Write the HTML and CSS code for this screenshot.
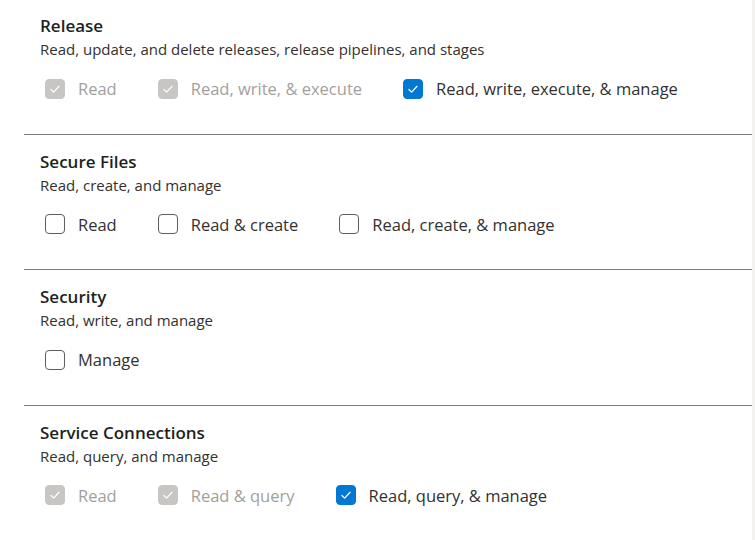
FILE: index.html
```html
<!DOCTYPE html>
<html lang="en">
<head>
<meta charset="utf-8">
<title>Scopes</title>
<link rel="stylesheet" href="styles.css">
</head>
<body>
<div class="page">
  <div class="content">
    <section class="scope">
      <div class="scope-title">Release</div>
      <div class="scope-desc">Read, update, and delete releases, release pipelines, and stages</div>
      <div class="options">
        <label class="option disabled"><span class="box checked"><svg viewBox="0 0 20 20"><path d="M5.5 10.5l3 3 6-6.5"/></svg></span><span class="text">Read</span></label>
        <label class="option disabled"><span class="box checked"><svg viewBox="0 0 20 20"><path d="M5.5 10.5l3 3 6-6.5"/></svg></span><span class="text">Read, write, &amp; execute</span></label>
        <label class="option"><span class="box checked"><svg viewBox="0 0 20 20"><path d="M5.5 10.5l3 3 6-6.5"/></svg></span><span class="text">Read, write, execute, &amp; manage</span></label>
      </div>
    </section>
    <section class="scope">
      <div class="scope-title">Secure Files</div>
      <div class="scope-desc">Read, create, and manage</div>
      <div class="options">
        <label class="option"><span class="box"></span><span class="text">Read</span></label>
        <label class="option"><span class="box"></span><span class="text">Read &amp; create</span></label>
        <label class="option"><span class="box"></span><span class="text">Read, create, &amp; manage</span></label>
      </div>
    </section>
    <section class="scope">
      <div class="scope-title">Security</div>
      <div class="scope-desc">Read, write, and manage</div>
      <div class="options">
        <label class="option"><span class="box"></span><span class="text">Manage</span></label>
      </div>
    </section>
    <section class="scope last">
      <div class="scope-title">Service Connections</div>
      <div class="scope-desc">Read, query, and manage</div>
      <div class="options">
        <label class="option disabled"><span class="box checked"><svg viewBox="0 0 20 20"><path d="M5.5 10.5l3 3 6-6.5"/></svg></span><span class="text">Read</span></label>
        <label class="option disabled"><span class="box checked"><svg viewBox="0 0 20 20"><path d="M5.5 10.5l3 3 6-6.5"/></svg></span><span class="text">Read &amp; query</span></label>
        <label class="option"><span class="box checked"><svg viewBox="0 0 20 20"><path d="M5.5 10.5l3 3 6-6.5"/></svg></span><span class="text">Read, query, &amp; manage</span></label>
      </div>
    </section>
  </div>
  <div class="scrollbar"></div>
</div>
</body>
</html>
```
FILE: styles.css
```css
html, body {
  margin: 0;
  padding: 0;
  background: #ffffff;
}
body {
  font-family: "Open Sans", "Noto Sans", sans-serif;
  color: #201f1e;
}
.page {
  display: flex;
  height: 540px;
  overflow: hidden;
}
.content {
  flex: 1;
  margin-left: 24px;
  margin-top: -1px;
}
.scrollbar {
  width: 3px;
  background: #f3f2f1;
}
.scope {
  padding: 16px 0 33px 16px;
  border-bottom: 1px solid #7a7a7a;
}
.scope.last {
  border-bottom: none;
}
.scope-title {
  font-size: 17px;
  font-weight: 600;
  line-height: 22px;
  color: #201f1e;
}
.scope-desc {
  font-size: 15px;
  line-height: 20px;
  margin-top: 2px;
  color: #323130;
}
.options {
  display: flex;
  gap: 41px;
  margin-top: 17.5px;
  padding-left: 5px;
  height: 24px;
  align-items: center;
}
.option {
  display: flex;
  align-items: center;
  gap: 13px;
  font-size: 16.5px;
  color: #323130;
}
.option.disabled {
  color: #a19f9d;
}
.box {
  width: 18px;
  height: 18px;
  border: 1px solid #605e5c;
  border-radius: 4px;
  display: flex;
  align-items: center;
  justify-content: center;
  background: #fff;
}
.box.checked {
  background: #0078d4;
  border-color: #0078d4;
}
.disabled .box.checked {
  background: #c8c6c4;
  border-color: #c8c6c4;
}
.box svg {
  width: 20px;
  height: 20px;
  fill: none;
  stroke: #ffffff;
  stroke-width: 1.4;
  stroke-linecap: round;
  stroke-linejoin: round;
}
```
